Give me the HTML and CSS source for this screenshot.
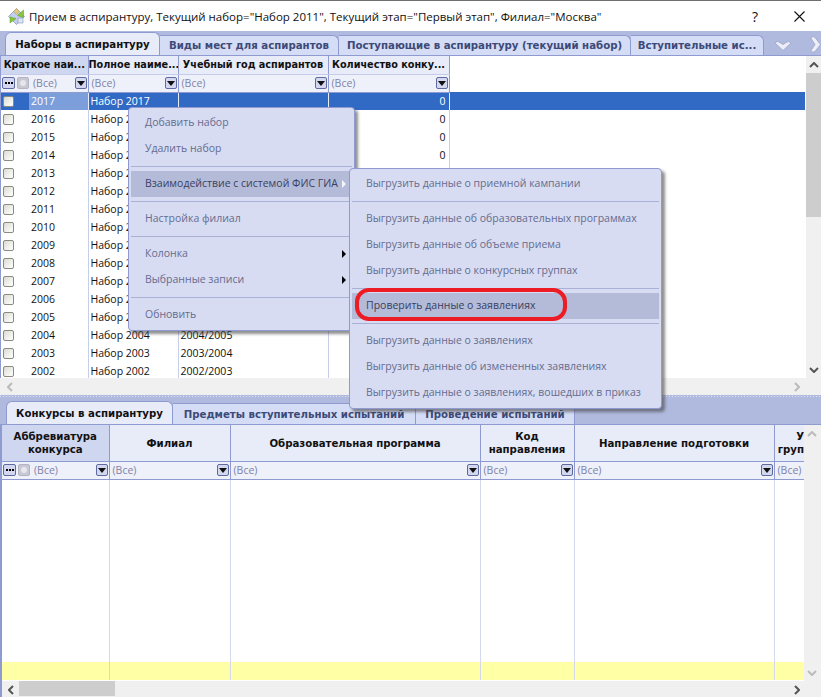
FILE: index.html
```html
<!DOCTYPE html>
<html lang="ru">

<head>
    <meta charset="UTF-8">
    <title>Прием в аспирантуру</title>
    <link rel="stylesheet" href="styles.css">
</head>

<body>
    <div class="window">
        <div class="title-bar">
            <svg class="app-icon" width="17" height="17" viewBox="0 0 17 17">
                <path d="M8.5 0.5 L16.5 8.5 L8.5 16.5 L0.5 8.5 Z" fill="#c3cdec" stroke="#8090b8" stroke-width="0.7"/>
                <path d="M8.5 0.5 L11.5 3.5 L8.5 6.5 L5.5 3.5 Z" fill="#e3c77e" stroke="#a89a70" stroke-width="0.5"/>
                <path d="M15.5 2 L15.5 9.5 L9.5 7.5 Z" fill="#86c83a" stroke="#5c9a28" stroke-width="0.5"/>
                <path d="M2 15 L2 9 L8 10.5 Z" fill="#86c83a" stroke="#5c9a28" stroke-width="0.5"/>
                <path d="M10 10 L15 10 L15 15 L10 15 Z" fill="#dfe5f5" stroke="#8090b8" stroke-width="0.6"/>
            </svg>
            <span class="title-text">Прием в аспирантуру, Текущий набор="Набор 2011", Текущий этап="Первый этап", Филиал="Москва"</span>
            <span class="help-btn">?</span>
            <svg class="close-btn" width="11" height="11" viewBox="0 0 11 11">
                <path d="M0.5 0.5 L10.5 10.5 M10.5 0.5 L0.5 10.5" stroke="#111" stroke-width="1.1"/>
            </svg>
        </div>

        <div class="tab-strip top-tabs">
            <div class="tab active tab-a">Наборы в аспирантуру</div>
            <div class="tab tab-b">Виды мест для аспирантов</div>
            <div class="tab tab-c">Поступающие в аспирантуру (текущий набор)</div>
            <div class="tab tab-d">Вступительные ис...</div>
            <svg class="tab-nav nav-down" width="18" height="11" viewBox="0 0 18 11">
                <path d="M1 3 Q3 0.5 5 2 L9 4.5 L13 2 Q15 0.5 17 3 L9.5 10 Q9 10.5 8.5 10 Z" fill="#eceef8" stroke="#98a2c8" stroke-width="0.8"/>
            </svg>
            <svg class="tab-nav nav-right" width="11" height="17" viewBox="0 0 11 17">
                <path d="M2 1 Q4 0 5 1.5 L10.5 8.5 L5 15.5 Q3 17 1.5 15.5 L1 14.5 L5 8.5 L1 2.5 Z" fill="#eceef8" stroke="#98a2c8" stroke-width="0.8"/>
            </svg>
        </div>

        <div class="grid-area upper-grid">
            <div class="grid-body">
                <table class="grid sets-grid">
                    <colgroup>
                        <col class="c-88"><col class="c-90"><col class="c-150"><col class="c-121">
                    </colgroup>
                    <thead>
                        <tr class="head-row">
                            <th class="sorted">Краткое наи...</th>
                            <th>Полное наиме...</th>
                            <th>Учебный год аспирантов</th>
                            <th>Количество конку...</th>
                        </tr>
                        <tr class="filter-row">
                            <td><div class="filter"><span class="tool-btn dots"></span><span class="tool-btn clear"></span><span class="any">(Все)</span><span class="drop"></span></div></td>
                            <td><div class="filter"><span class="any">(Все)</span><span class="drop"></span></div></td>
                            <td><div class="filter"><span class="any">(Все)</span><span class="drop"></span></div></td>
                            <td><div class="filter"><span class="any">(Все)</span><span class="drop"></span></div></td>
                        </tr>
                    </thead>
                    <tbody id="sets-rows"></tbody>
                </table>
                <div class="selected-rest"></div>
            </div>
            <div class="v-scroll">
                <span class="arrow-box"><svg width="10" height="6" viewBox="0 0 10 6"><path d="M1 5 L5 1 L9 5" fill="none" stroke="#555" stroke-width="2"/></svg></span>
                <span class="v-thumb"></span>
                <span class="v-track"></span>
                <span class="arrow-box"><svg width="10" height="6" viewBox="0 0 10 6"><path d="M1 1 L5 5 L9 1" fill="none" stroke="#555" stroke-width="2"/></svg></span>
            </div>
        </div>
        <div class="h-scroll light">
            <span class="arrow-box"><svg width="6" height="10" viewBox="0 0 6 10"><path d="M5 1 L1 5 L5 9" fill="none" stroke="#bbb" stroke-width="2"/></svg></span>
            <span class="h-track"></span>
            <span class="arrow-box"><svg width="6" height="10" viewBox="0 0 6 10"><path d="M1 1 L5 5 L1 9" fill="none" stroke="#bbb" stroke-width="2"/></svg></span>
        </div>

        <div class="splitter"></div>

        <div class="tab-strip lower-tabs">
            <div class="tab active tab-e">Конкурсы в аспирантуру</div>
            <div class="tab tab-f">Предметы вступительных испытаний</div>
            <div class="tab tab-g">Проведение испытаний</div>
        </div>

        <div class="grid-area lower-grid">
            <div class="grid-body lower-body">
                <table class="grid contests-grid">
                    <colgroup>
                        <col class="c-107"><col class="c-121"><col class="c-250"><col class="c-94"><col class="c-200"><col class="c-30">
                    </colgroup>
                    <thead>
                        <tr class="head-row tall">
                            <th class="sorted">Аббревиатура<br>конкурса</th>
                            <th>Филиал</th>
                            <th>Образовательная программа</th>
                            <th>Код<br>направления</th>
                            <th>Направление подготовки</th>
                            <th class="cut">У<br>груп</th>
                        </tr>
                        <tr class="filter-row">
                            <td><div class="filter"><span class="tool-btn dots"></span><span class="tool-btn clear"></span><span class="any">(Все)</span><span class="drop"></span></div></td>
                            <td><div class="filter"><span class="any">(Все)</span><span class="drop"></span></div></td>
                            <td><div class="filter"><span class="any">(Все)</span><span class="drop"></span></div></td>
                            <td><div class="filter"><span class="any">(Все)</span><span class="drop"></span></div></td>
                            <td><div class="filter"><span class="any">(Все)</span><span class="drop"></span></div></td>
                            <td><div class="filter"><span class="any">(Все)</span></div></td>
                        </tr>
                    </thead>
                    <tbody>
                        <tr class="empty-row"><td></td><td></td><td></td><td></td><td></td><td></td></tr>
                        <tr class="total-row"><td></td><td></td><td></td><td></td><td></td><td></td></tr>
                    </tbody>
                </table>
            </div>
            <div class="v-scroll pale">
                <span class="arrow-box"><svg width="10" height="6" viewBox="0 0 10 6"><path d="M1 5 L5 1 L9 5" fill="none" stroke="#bbb" stroke-width="2"/></svg></span>
                <span class="v-track"></span>
                <span class="arrow-box"><svg width="10" height="6" viewBox="0 0 10 6"><path d="M1 1 L5 5 L9 1" fill="none" stroke="#bbb" stroke-width="2"/></svg></span>
            </div>
        </div>
        <div class="h-scroll lower-scroll">
            <span class="arrow-box"><svg width="6" height="10" viewBox="0 0 6 10"><path d="M5 1 L1 5 L5 9" fill="none" stroke="#555" stroke-width="2"/></svg></span>
            <span class="h-thumb"></span>
            <span class="h-track"></span>
            <span class="arrow-box"><svg width="6" height="10" viewBox="0 0 6 10"><path d="M1 1 L5 5 L1 9" fill="none" stroke="#555" stroke-width="2"/></svg></span>
        </div>

        <ul class="menu main-menu">
            <li>Добавить набор</li>
            <li>Удалить набор</li>
            <li class="sep"></li>
            <li class="hot sub white-arrow">Взаимодействие с системой ФИС ГИА</li>
            <li class="sep"></li>
            <li>Настройка филиал</li>
            <li class="sep"></li>
            <li class="sub">Колонка</li>
            <li class="sub">Выбранные записи</li>
            <li class="sep"></li>
            <li>Обновить</li>
        </ul>

        <ul class="menu export-menu">
            <li>Выгрузить данные о приемной кампании</li>
            <li class="sep"></li>
            <li>Выгрузить данные об образовательных программах</li>
            <li>Выгрузить данные об объеме приема</li>
            <li>Выгрузить данные о конкурсных группах</li>
            <li class="sep"></li>
            <li class="hot">Проверить данные о заявлениях</li>
            <li class="sep"></li>
            <li>Выгрузить данные о заявлениях</li>
            <li>Выгрузить данные об измененных заявлениях</li>
            <li>Выгрузить данные о заявлениях, вошедших в приказ</li>
        </ul>

        <div class="red-mark"></div>
    </div>

    <script>
        let rows = document.querySelector("#sets-rows");
        let years = [2017, 2016, 2015, 2014, 2013, 2012, 2011, 2010, 2009, 2008, 2007, 2006, 2005, 2004, 2003, 2002];

        years.forEach(function (year, i) {
            let row = document.createElement("tr");
            if (i == 0) row.className = "selected";

            // учебный год виден только с 2004 и ниже, выше он закрыт меню
            let study = year <= 2004 ? year + "/" + (year + 1) : "";
            let count = i < 4 ? "0" : "";

            row.innerHTML = `<td class="year-cell"><span class="check"></span><span>${year}</span></td>
                <td>Набор ${year}</td><td>${study}</td><td class="num">${count}</td>`;
            rows.appendChild(row);
        });
    </script>
</body>

</html>
```

FILE: styles.css
```css
* {
    box-sizing: border-box;
}

html, body {
    margin: 0;
    height: 100%;
    overflow: hidden;
}

body {
    font-family: Tahoma, "DejaVu Sans", sans-serif;
    font-size: 11px;
    color: #111;
    background: #fff;
}

.window {
    position: relative;
    width: 821px;
    height: 697px;
    display: flex;
    flex-direction: column;
    border-top: 1px solid #707070;
    overflow: hidden;
}

.title-bar {
    height: 30px;
    flex: none;
    display: flex;
    align-items: center;
    padding-left: 8px;
    background: #fff;
}

.app-icon {
    margin-right: 4px;
}

.title-text {
    font-family: "Open Sans", sans-serif;
    font-size: 11.5px;
    color: #111;
    flex: 1;
    white-space: nowrap;
}

.help-btn {
    font-family: "Open Sans", sans-serif;
    font-size: 14px;
    margin-right: 36px;
}

.close-btn {
    margin-right: 16px;
}

.tab-strip {
    flex: none;
    display: flex;
    align-items: flex-end;
    background: #b0b9de;
    padding-left: 5px;
}

.top-tabs {
    height: 25px;
    border-bottom: 1px solid #8f9bd0;
}

.lower-tabs {
    height: 25px;
    border-bottom: 1px solid #8f9bd0;
    padding-left: 6px;
}

.tab {
    height: 20px;
    font-family: "DejaVu Sans", sans-serif;
    font-weight: bold;
    font-size: 10.2px;
    line-height: 20px;
    color: #3c4a78;
    background: #d5dcf5;
    border: 1px solid #8f9bd0;
    border-bottom: none;
    border-left: none;
    border-radius: 0 6px 0 0;
    text-align: center;
    white-space: nowrap;
    overflow: hidden;
}

.lower-tabs .tab {
    height: 21px;
    line-height: 22px;
}

.tab.active, .lower-tabs .tab.active {
    height: 23px;
    line-height: 24px;
    background: #e8ebf8;
    color: #111;
    border-left: 1px solid #8f9bd0;
    border-radius: 6px 6px 0 0;
}

.tab-a { width: 155px; }
.tab-b { width: 179px; }
.tab-c { width: 292px; }
.tab-d { width: 133px; }
.tab-e { width: 167px; }
.tab-f { width: 243px; }
.tab-g { width: 159px; }

.nav-down {
    margin: 0 0 4px 10px;
}

.nav-right {
    margin: 0 0 2px 18px;
    flex: none;
}

.grid-area {
    display: flex;
    flex: none;
    background: #fff;
}

.upper-grid {
    height: 322px;
}

.lower-grid {
    height: 256px;
}

.grid-body {
    position: relative;
    flex: 1;
    min-width: 0;
    overflow: hidden;
    border-left: 1px solid #8f9bd0;
}

.lower-body {
    border-left-width: 2px;
}

.grid {
    border-collapse: collapse;
    table-layout: fixed;
    font-family: "DejaVu Sans", sans-serif;
    font-size: 10.2px;
}

.sets-grid { width: 448px; }
.contests-grid { width: 802px; height: 256px; }

.c-88 { width: 87px; }
.c-90 { width: 90px; }
.c-150 { width: 150px; }
.c-121 { width: 121px; }
.c-107 { width: 107px; }
.c-250 { width: 250px; }
.c-94 { width: 94px; }
.c-200 { width: 200px; }
.c-30 { width: 30px; }

.head-row th {
    height: 18px;
    padding: 0;
    background: #e8ebf8;
    border-right: 1px solid #8f9bd0;
    border-bottom: 1px solid #c5cbe8;
    font-weight: bold;
    font-size: 10.2px;
    color: #111;
    overflow: hidden;
    white-space: nowrap;
    text-align: center;
}

.sets-grid .head-row th {
    font-size: 9.7px;
}

.head-row th.sorted {
    background: #cfd6ef;
}

.head-row.tall th {
    height: 36px;
    line-height: 13px;
    padding-top: 1px;
    border-bottom: 1px solid #8f9bd0;
}

.head-row.tall th.cut {
    text-align: right;
    border-right: none;
    padding: 1px 0 0;
}

.filter-row td {
    height: 18px;
    padding: 0;
    background: #eef0fa;
    border-right: 1px solid #8f9bd0;
    border-bottom: 1px solid #8f9bd0;
}

.filter {
    display: flex;
    align-items: center;
    height: 17px;
    padding: 0 1px;
    overflow: hidden;
}

.any {
    flex: 1;
    font-size: 10.5px;
    font-family: "Open Sans", sans-serif;
    color: #7d83a8;
    padding-left: 2px;
    white-space: nowrap;
}

.tool-btn, .drop {
    position: relative;
    flex: none;
    width: 12px;
    height: 12px;
    border: 1px solid #5f6a9e;
    border-radius: 2px;
    background: #d3d8f0;
}

.tool-btn {
    margin-right: 2px;
}

.tool-btn.dots {
    width: 13px;
}

.tool-btn.clear {
    background: #c8c8d4;
    border-color: #b4b4c4;
}

.tool-btn.clear::after {
    content: "";
    position: absolute;
    left: 2px;
    top: 2px;
    width: 6px;
    height: 6px;
    border-radius: 50%;
    background: #e6e6ec;
}

.tool-btn.dots::after {
    content: "";
    position: absolute;
    left: 2px;
    top: 4px;
    width: 8px;
    height: 2px;
    background: repeating-linear-gradient(to right, #000 0 2px, transparent 2px 3px);
}

.drop::after {
    content: "";
    position: absolute;
    left: 1px;
    top: 3px;
    border: 4px solid transparent;
    border-top: 5px solid #111;
    border-bottom: none;
}

tbody td {
    height: 18px;
    padding: 0 2px;
    font-size: 10.5px;
    font-family: "Open Sans", sans-serif;
    border-right: 1px solid #c9cee8;
    white-space: nowrap;
    overflow: hidden;
}

.year-cell {
    padding: 0;
}

.year-cell span:last-child {
    margin-left: 17px;
}

.check {
    display: inline-block;
    vertical-align: -2px;
    width: 11px;
    height: 11px;
    margin-left: 2px;
    border: 1px solid #8a8a80;
    border-radius: 2px;
    background: linear-gradient(to bottom right, #dcdcd4, #fff);
}

.num {
    text-align: right;
    padding-right: 3px;
}

.selected td {
    background: #316ac5;
    color: #fff;
    border-right-color: #e8ebf8;
}

.selected .year-cell {
    background: linear-gradient(to right, #316ac5 0 28px, #7c9fdc 28px);
}

.selected-rest {
    position: absolute;
    left: 449px;
    right: 0;
    top: 36px;
    height: 18px;
    background: #316ac5;
}

.empty-row td {
    height: auto;
    border-right-color: #d5d8ec;
}

.total-row td {
    height: 19px;
    background: #ffffa6;
    border-right-color: #d5d8ec;
    border-bottom: 1px solid #fff;
}

.v-scroll {
    flex: none;
    width: 16px;
    display: flex;
    flex-direction: column;
    background: #f0f0f0;
    border-left: 1px solid #fff;
}

.v-scroll.pale {
    width: 17px;
    border-left: none;
}

.v-thumb {
    height: 144px;
    background: #cdcdcd;
}

.v-track {
    flex: 1;
}

.arrow-box {
    flex: none;
    width: 16px;
    height: 17px;
    display: flex;
    align-items: center;
    justify-content: center;
}

.h-scroll {
    flex: none;
    height: 17px;
    display: flex;
    background: #f0f0f0;
    padding-left: 2px;
    padding-right: 16px;
}

.lower-scroll {
    height: 16px;
    padding-left: 1px;
    border-left: 2px solid #8f9bd0;
}

.h-scroll .h-thumb {
    width: 96px;
    margin: 0 0 1px;
    background: #cdcdcd;
}

.h-track {
    flex: 1;
}

.splitter {
    flex: none;
    height: 5px;
    background: #b0b9de;
    background-image: repeating-linear-gradient(to right, #dfe3f4 0 1px, transparent 1px 3px);
    background-size: 100% 1px;
    background-repeat: no-repeat;
    background-position: 0 1px;
}

.menu {
    position: absolute;
    margin: 0;
    padding: 2px;
    list-style: none;
    background: #d7dcf2;
    border: 1px solid #8f9bd0;
    border-radius: 4px;
    box-shadow: 3px 3px 3px rgba(70, 70, 70, 0.6);
    font-family: "Open Sans", sans-serif;
    font-size: 10.5px;
    color: #666c90;
}

.main-menu {
    left: 128px;
    top: 106px;
    width: 227px;
}

.export-menu {
    left: 349px;
    top: 167px;
    width: 313px;
}

.menu li {
    position: relative;
    height: 26px;
    line-height: 24px;
    padding-left: 14px;
    white-space: nowrap;
}

.menu li.sep {
    height: 9px;
    padding: 0;
    background: linear-gradient(#a9b1d6, #a9b1d6) center / 100% 1px no-repeat;
}

.menu li.hot {
    background: #b4bbd9;
    color: #3a3f60;
}

.menu li.sub::after {
    content: "";
    position: absolute;
    right: 6px;
    top: 9px;
    border: 4px solid transparent;
    border-left: 4px solid #000;
    border-right: none;
}

.menu li.white-arrow::after {
    border-left-color: #f4f5fb;
}

.red-mark {
    position: absolute;
    left: 355px;
    top: 287px;
    width: 212px;
    height: 33px;
    border: 4px solid #ed1c24;
    border-radius: 14px;
}
```
